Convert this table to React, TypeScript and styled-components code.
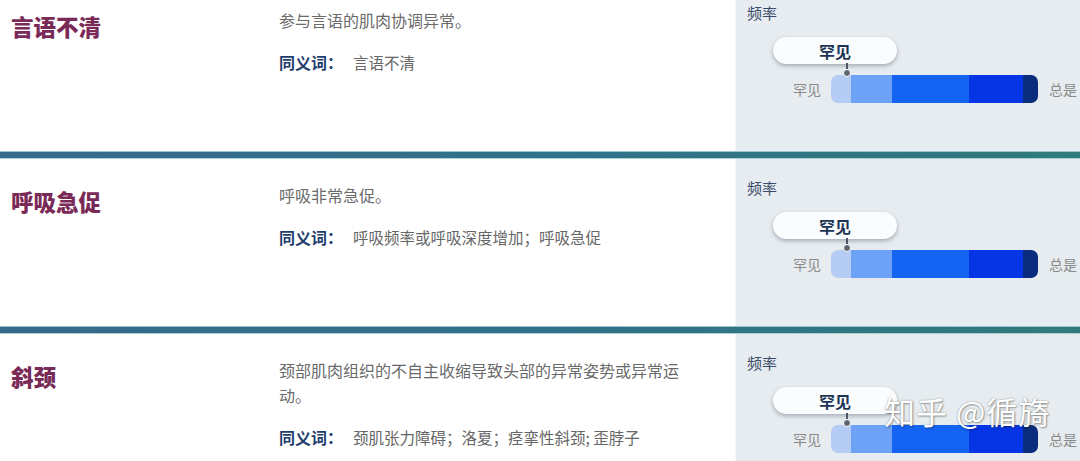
import styled, { createGlobalStyle } from "styled-components";

const Global = createGlobalStyle`
  html, body {
    margin: 0;
    padding: 0;
    background: #ffffff;
    overflow: hidden;
  }
  body {
    font-family: "Noto Sans CJK SC", "Noto Sans", sans-serif;
  }
`;

type Symptom = {
  title: string;
  desc: string;
  synonyms: string;
};

const items: Symptom[] = [
  {
    title: "言语不清",
    desc: "参与言语的肌肉协调异常。",
    synonyms: "言语不清",
  },
  {
    title: "呼吸急促",
    desc: "呼吸非常急促。",
    synonyms: "呼吸频率或呼吸深度增加；呼吸急促",
  },
  {
    title: "斜颈",
    desc: "颈部肌肉组织的不自主收缩导致头部的异常姿势或异常运动。",
    synonyms: "颈肌张力障碍；洛夏；痉挛性斜颈; 歪脖子",
  },
];

const segments = [
  { w: 20, c: "#b5cdf4" },
  { w: 41, c: "#6ea2f6" },
  { w: 77, c: "#1463f3" },
  { w: 54, c: "#0535e4" },
  { w: 15, c: "#0a2c7c" },
];

const Frequency = () => (
  <Panel>
    <PanelTitle>频率</PanelTitle>
    <Pill>罕见</Pill>
    <Scale>
      <ScaleLabel>罕见</ScaleLabel>
      <Bar>
        {segments.map((s, i) => (
          <Segment key={i} $w={s.w} $c={s.c} />
        ))}
        <Pin>
          <PinLine />
          <PinDot />
        </Pin>
      </Bar>
      <ScaleLabel>总是</ScaleLabel>
    </Scale>
  </Panel>
);

const App = () => {
  return (
    <Page>
      <Global />
      {items.map((it, i) => (
        <div key={i}>
          {i > 0 && <Divider />}
          <Row>
            <Title>{it.title}</Title>
            <Body>
              <Desc>{it.desc}</Desc>
              <Syn>
                <SynLabel>同义词：</SynLabel>
                <SynText>{it.synonyms}</SynText>
              </Syn>
            </Body>
            <Frequency />
          </Row>
        </div>
      ))}
      <Watermark>知乎 @循旖</Watermark>
    </Page>
  );
};

export default App;

const Page = styled.div`
  position: relative;
  width: 1080px;
  height: 461px;
  overflow: hidden;
  background: #ffffff;
  & > div:first-child {
    margin-top: -16px;
  }
`;

const Divider = styled.div`
  height: 6px;
  border-top: 1px solid #9cc3cc;
  border-bottom: 1px solid #a9cfd3;
  background: linear-gradient(90deg, #376a8b 0%, #32718a 50%, #2f7b7c 100%);
`;

const Row = styled.section`
  display: grid;
  grid-template-columns: 279px 456px 345px;
  height: 167px;
`;

const Title = styled.h2`
  margin: 0;
  padding: 29px 0 0 11px;
  font-size: 22.5px;
  line-height: 26px;
  font-weight: 900;
  color: #7a2a57;
`;

const Body = styled.div`
  padding: 24px 30px 0 0;
  display: flex;
  flex-direction: column;
  gap: 17px;
`;

const Desc = styled.p`
  margin: 0;
  font-size: 16px;
  line-height: 25px;
  color: #6a6a6a;
  max-width: 426px;
`;

const Syn = styled.div`
  display: flex;
  align-items: center;
  font-size: 16px;
  line-height: 25px;
`;

const SynLabel = styled.span`
  font-weight: 700;
  color: #1f3d6d;
  width: 74px;
`;

const SynText = styled.span`
  color: #666666;
  font-size: 15.5px;
`;

const Panel = styled.div`
  background: #e6ecef;
  border-left: 1px solid #f2f6f7;
  padding: 19px 0 0 11px;
  display: flex;
  flex-direction: column;
`;

const PanelTitle = styled.div`
  font-size: 15px;
  line-height: 20px;
  color: #3b4b6b;
`;

const Pill = styled.div`
  margin: 14px 0 0 26px;
  width: 124px;
  height: 27px;
  border-radius: 14px;
  background: #fbfcfe;
  box-shadow: 0 2px 4px rgba(40, 50, 70, 0.35);
  display: flex;
  align-items: center;
  justify-content: center;
  font-size: 16px;
  font-weight: 700;
  color: #1d3554;
`;

const Scale = styled.div`
  margin: 11px 0 0 46px;
  display: flex;
  align-items: center;
  gap: 8px;
`;

const ScaleLabel = styled.span`
  font-size: 14px;
  color: #8a8a8a;
  width: 30px;
  white-space: nowrap;
`;

const Bar = styled.div`
  position: relative;
  display: flex;
  height: 28px;
  width: 207px;
  border-radius: 7px;
  margin-right: 3px;
  & > div:first-child {
    border-radius: 7px 0 0 7px;
  }
  & > div:nth-child(5) {
    border-radius: 0 7px 7px 0;
  }
`;

const Segment = styled.div<{ $w: number; $c: string }>`
  width: ${(p) => p.$w}px;
  background: ${(p) => p.$c};
  flex-shrink: 0;
`;

const Pin = styled.div`
  position: absolute;
  left: 12px;
  top: -12px;
  width: 8px;
  display: flex;
  flex-direction: column;
  align-items: center;
`;

const PinLine = styled.div`
  width: 2px;
  height: 6px;
  background: #4d5766;
`;

const PinDot = styled.div`
  width: 6px;
  height: 6px;
  border-radius: 50%;
  background: #5e6672;
  border: 1px solid #ffffff;
`;

const Watermark = styled.div`
  position: absolute;
  left: 884px;
  top: 391px;
  font-size: 31px;
  line-height: 40px;
  color: #ffffff;
  letter-spacing: 1px;
  text-shadow: 0 0 2px rgba(0, 0, 0, 0.35), 1px 1px 2px rgba(0, 0, 0, 0.3);
  white-space: nowrap;
  pointer-events: none;
`;
